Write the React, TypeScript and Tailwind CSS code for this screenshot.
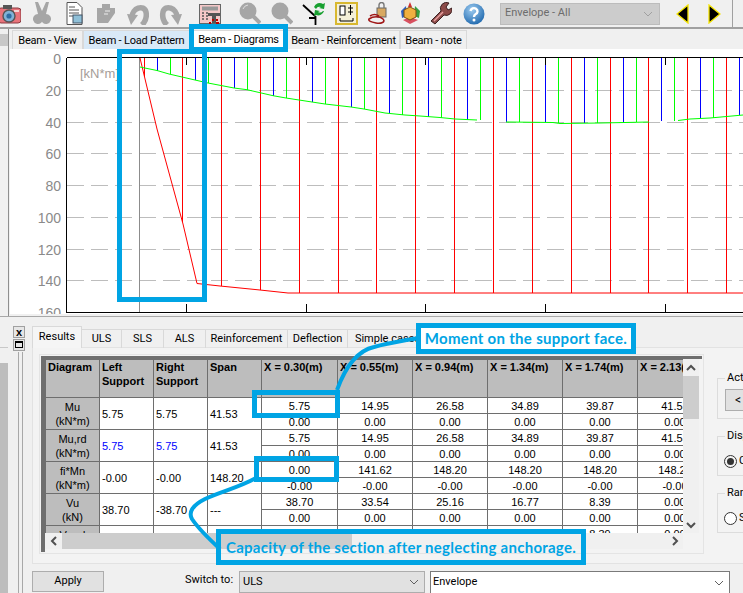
import React from 'react';

const sans = "font-['Roboto',sans-serif]";
const arial = "font-['Liberation_Sans',Arial,sans-serif]";

const redPts: [number, number][] = [[140, 59], [157, 130], [183, 225], [197, 284.5], [220, 287], [260, 291], [288, 294], [743, 294]];
const greenPts: [number, number][] = [
  [140, 68], [157, 71.5], [169, 75], [195, 81], [208, 84], [234, 89], [247, 90.7], [273, 96.7], [286, 99], [312, 103], [325, 105], [351, 108], [364, 110],
  [385, 114], [405, 116], [420, 117], [440, 118.5], [455, 120], [477, 121], [506, 123], [553, 123.5], [560, 124.5], [600, 124], [649, 123],
  [678, 121.5], [690, 120], [710, 119], [743, 116],
];

function at(pts: [number, number][], x: number) {
  for (let i = 1; i < pts.length; i++) {
    if (x <= pts[i][0]) {
      const [x0, y0] = pts[i - 1];
      const [x1, y1] = pts[i];
      return y0 + ((y1 - y0) * (x - x0)) / (x1 - x0);
    }
  }
  return pts[pts.length - 1][1];
}

const line = (pts: [number, number][]) => pts.map((p) => p.join(',')).join(' ');
const reds = [144.5, 182.5, 221.5, 260.5, 299.5, 338.5, 376.5, 415.5, 454.5, 493.5, 532.5, 571.5, 610.5, 648.5, 687.5, 726.5];
const ticks = [186.5, 306.5, 425.5, 545.5, 665.5];
const yLabels = [0, 20, 40, 60, 80, 100, 120, 140, 160];

function Chart() {
  return (
    <svg viewBox="10 50 733 265" className="block h-[265px] w-[733px] bg-white">
      {yLabels.map((v, i) => {
        const y = Math.round(59 + i * 31.75) + 0.5;
        return (
          <g key={v}>
            {i > 0 && i < 8 && <line x1={67} x2={743} y1={y} y2={y} stroke="#bdbdbd" strokeDasharray="17 7" />}
            <text x={61} y={y + 5} textAnchor="end" fontSize={14} fill="#8a8a8a" fontFamily="Liberation Sans">{v}</text>
          </g>
        );
      })}
      <text x={80} y={79} fontSize={13} fill="#a59d98" fontFamily="Liberation Sans">[kN*m]</text>
      <line x1={139.5} x2={139.5} y1={59} y2={313} stroke="#8c8c8c" />
      <g shapeRendering="crispEdges">
        {reds.map((x) => (
          <React.Fragment key={x}>
            <line x1={x} x2={x} y1={59} y2={at(redPts, x)} stroke="#ff0000" />
            <line x1={x + 13} x2={x + 13} y1={59} y2={at(greenPts, x + 13)} stroke="#0000ff" />
            <line x1={x + 26} x2={x + 26} y1={59} y2={at(greenPts, x + 26)} stroke="#00ff00" />
          </React.Fragment>
        ))}
        {ticks.map((x) => (
          <React.Fragment key={x}>
            <line x1={x} x2={x} y1={59} y2={66} stroke="#000" />
            <line x1={x} x2={x} y1={305} y2={313} stroke="#000" />
          </React.Fragment>
        ))}
      </g>
      <polyline points={line(redPts)} fill="none" stroke="#ff0000" />
      <polyline points={line(greenPts.filter((p) => p[0] <= 477))} fill="none" stroke="#00ff00" />
      <polyline points={line(greenPts.filter((p) => p[0] >= 506 && p[0] <= 649))} fill="none" stroke="#00ff00" strokeWidth={1.2} />
      <polyline points={line(greenPts.filter((p) => p[0] >= 678))} fill="none" stroke="#00ff00" />
      <path d="M66.5 58.5H743M66.5 58.5V313.5H743" fill="none" stroke="#000" shapeRendering="crispEdges" />
    </svg>
  );
}

function Toolbar() {
  const gray = '#a6a6a6';
  return (
    <div className="relative flex h-[27px] shrink-0 items-center">
      <svg width="21" height="20" viewBox="0 0 21 20" className="mt-[3px]">
        <rect x="-2" y="3" width="23" height="15" rx="3" fill="#e8737a" stroke="#8a3a40" />
        <rect x="3" y="0" width="9" height="4" fill="#555" />
        <rect x="14" y="5" width="5" height="2" fill="#f5d5d5" />
        <circle cx="9" cy="11" r="6" fill="#7fb2d6" stroke="#555" strokeWidth="1.4" />
        <circle cx="9" cy="11" r="2.6" fill="#2c6da3" />
      </svg>
      <svg width="18" height="23" viewBox="0 0 18 23" className="ml-[12px]">
        <path d="M2 0l3 0 4 9 4-9 3 0-3 12a5 5 0 1 1-3 9 4 4 0 0 1-1-5 4 4 0 0 1-1 5 5 5 0 1 1-3-9z" fill={gray} />
      </svg>
      <svg width="18" height="23" viewBox="0 0 18 23" className="ml-[15px]">
        <path d="M1 .5h10l5 5v17H1z" fill="#fff" stroke="#555" />
        <path d="M3 5h6M3 8h10M3 11h10M3 14h4" stroke="#555" />
        <rect x="7" y="13" width="9" height="8" fill="#8fc0d8" stroke="#456" />
      </svg>
      <svg width="21" height="21" viewBox="0 0 21 21" className="ml-[12px]">
        <path d="M1 5h5V1h8v4h5v5l-7 10H1z" fill={gray} />
        <path d="M9 8h5M8 11h4" stroke="#eee" />
      </svg>
      <svg width="22" height="22" viewBox="0 0 22 22" className="ml-[10px]">
        <path d="M5 14C5 5 17 1 19 9c1 5 0 9-4 13" fill="none" stroke={gray} strokeWidth="5.500" />
        <path d="M0 11l11 1-7 10z" fill={gray} />
      </svg>
      <svg width="24" height="22" viewBox="0 0 24 22" className="ml-[9px]">
        <path d="M19 14C19 5 7 1 5 9c-1 5 0 9 4 13" fill="none" stroke={gray} strokeWidth="5.500" />
        <path d="M24 11l-11 1 7 10z" fill={gray} />
      </svg>
      <svg width="23" height="22" viewBox="0 0 23 22" className="ml-[17px]">
        <rect x=".5" y="1.5" width="21" height="19" fill="#f5c8c8" stroke="#666" />
        <rect x="3" y="3.5" width="16" height="4" fill="#999" />
        <path d="M3 10h2M7 10h2M3 13h2M7 13h2M3 16h2M7 16h2" stroke="#555" strokeWidth="1.4" />
        <path d="M9 10h12v3h-4v7h-4v-7H9z" fill="#555" />
        <path d="M13 17h2M17 17h2M17 20h3M10 20h2" stroke="#b00" strokeWidth="2" />
      </svg>
      <svg width="23" height="23" viewBox="0 0 23 23" className="ml-[16px]">
        <circle cx="10" cy="9" r="8.5" fill={gray} />
        <path d="M15 14l7 7" stroke={gray} strokeWidth="4" />
        <path d="M5 7a6 6 0 0 1 5-4" stroke="#ddd" fill="none" />
      </svg>
      <svg width="23" height="23" viewBox="0 0 23 23" className="ml-[9px]">
        <circle cx="10" cy="9" r="8.5" fill={gray} />
        <path d="M15 14l7 7" stroke={gray} strokeWidth="4" />
      </svg>
      <svg width="24" height="23" viewBox="0 0 24 23" className="ml-[9px]">
        <path d="M1 3l12 11M7 16h7M13.500 14v9" stroke="#000" strokeWidth="1.800" fill="none" />
        <path d="M12 5a6 6 0 0 1 9-3l2-1-1 6-5-1 2-1a4 4 0 0 0-5 2zM22 9a6 6 0 0 1-8 4l-2 1 1-6 5 1-2 1a4 4 0 0 0 5-1z" fill="#18a030" />
      </svg>
      <svg width="23" height="23" viewBox="0 0 23 23" className="ml-[9px]">
        <rect x="1" y="1" width="21" height="21" fill="#f5f0d8" stroke="#d8b830" strokeWidth="2" />
        <rect x="5" y="4" width="5" height="9" fill="#fff" stroke="#000" />
        <path d="M13 6h5M13 10h5M15.500 3v10M5 16v3h13v-3" stroke="#000" fill="none" />
      </svg>
      <svg width="20" height="23" viewBox="0 0 20 23" className="ml-[10px]">
        <rect x="9" y="6" width="9" height="9" fill="#d8a860" stroke="#666" />
        <path d="M11 6V3a2.500 2.500 0 0 1 5 0v3" fill="none" stroke="#777" strokeWidth="1.400" />
        <path d="M1 17c4-3 11-3 14 0s-2 5-7 4-8-2-7-4zM2 14c3-2 6-2 9 0" fill="none" stroke="#a01818" strokeWidth="1.600" />
      </svg>
      <svg width="21" height="23" viewBox="0 0 21 23" className="ml-[12px]">
        <path d="M1 9l5-5 1 10-5 2z" fill="#3060c0" />
        <path d="M20 9l-5-5-1 10 5 2z" fill="#38a040" />
        <path d="M3 18l7 4 8-4-8-3z" fill="#d85060" />
        <path d="M10 0l2 5H8z" fill="#d03030" />
        <path d="M10 5l6 3v7l-6 3-6-3V8z" fill="#f0b040" stroke="#7a5010" />
      </svg>
      <svg width="22" height="23" viewBox="0 0 22 23" className="ml-[9px]">
        <path d="M1 19L11 9a6 6 0 0 1 8-8l-3 4 2 3 4-2a6 6 0 0 1-8 7L5 22z" fill="#8c4a48" stroke="#3a2020" />
        <path d="M4 19l9-9" stroke="#eaa0a0" strokeWidth="1.500" />
      </svg>
      <svg width="22" height="22" viewBox="0 0 22 22" className="ml-[11px]">
        <defs>
          <radialGradient id="help" cx="0.4" cy="0.3" r="0.8">
            <stop stopColor="#9ccbf0" />
            <stop offset="1" stopColor="#1560a8" />
          </radialGradient>
        </defs>
        <circle cx="11" cy="11" r="10.500" fill="url(#help)" />
        <path d="M7.500 8a3.500 3.200 0 1 1 5 3.200c-1 .6-1.500 1.200-1.500 2.800" fill="none" stroke="#fff" strokeWidth="2.400" />
        <circle cx="11" cy="17" r="1.500" fill="#fff" />
      </svg>
      <div className={`ml-[15px] flex h-[22px] w-[160px] items-center justify-between border border-[#bcbcbc] bg-[#cccccc] pl-[4px] pr-[6px] text-[11px] text-[#6d6d6d] ${sans}`}>
        <span>Envelope - All</span>
        <svg width="10" height="6" viewBox="0 0 10 6"><path d="M1 1l4 4 4-4" fill="none" stroke="#a0a0a0" /></svg>
      </div>
      <svg width="13" height="20" viewBox="0 0 13 20" className="ml-[16px]"><path d="M12 1v18L1 10z" fill="#000" stroke="#f4e400" strokeWidth="1.300" /></svg>
      <svg width="13" height="20" viewBox="0 0 13 20" className="ml-[19px]"><path d="M1 1v18l11-9z" fill="#000" stroke="#f4e400" strokeWidth="1.300" /></svg>
      <div className="ml-[11px] h-full w-px bg-[#a0a0a0]" />
    </div>
  );
}

const topTabs = [
  { label: 'Beam - View', w: 'w-[71px] pt-[2px]', cls: 'bg-[#f0f0f0]' },
  { label: 'Beam - Load Pattern', w: 'w-[107px] pt-[2px]', cls: 'bg-[#d9e9f7]' },
  { label: 'Beam - Diagrams', w: 'w-[97px] pb-[1px]', cls: 'bg-white' },
  { label: 'Beam - Reinforcement', w: 'w-[113px] pt-[2px]', cls: 'bg-[#f0f0f0]' },
  { label: 'Beam - note', w: 'w-[67px] pt-[2px]', cls: 'bg-[#f0f0f0]' },
];

const subTabs = [
  { label: 'ULS', w: 'w-[40px]' },
  { label: 'SLS', w: 'w-[42px]' },
  { label: 'ALS', w: 'w-[42px]' },
  { label: 'Reinforcement', w: 'w-[82px]' },
  { label: 'Deflection', w: 'w-[60px]' },
  { label: 'Simple cases', w: 'w-[80px]' },
];

type Row = { name: string; unit: string; left: string; right: string; span: string; blue?: boolean; values: [string, string][] };

const xHead = ['X = 0.30(m)', 'X = 0.55(m)', 'X = 0.94(m)', 'X = 1.34(m)', 'X = 1.74(m)', 'X = 2.13(m)'];
const zeros = (vals: string[], low = '0.00') => vals.map((v) => [v, low] as [string, string]);
const mu = ['5.75', '14.95', '26.58', '34.89', '39.87', '41.53'];
const vu = ['38.70', '33.54', '25.16', '16.77', '8.39', '0.00'];

const rows: Row[] = [
  { name: 'Mu', unit: '(kN*m)', left: '5.75', right: '5.75', span: '41.53', values: zeros(mu) },
  { name: 'Mu,rd', unit: '(kN*m)', left: '5.75', right: '5.75', span: '41.53', blue: true, values: zeros(mu) },
  { name: 'fi*Mn', unit: '(kN*m)', left: '-0.00', right: '-0.00', span: '148.20', values: zeros(['0.00', '141.62', '148.20', '148.20', '148.20', '148.20'], '-0.00') },
  { name: 'Vu', unit: '(kN)', left: '38.70', right: '-38.70', span: '---', values: zeros(vu) },
  { name: 'Vu,rd', unit: '(kN)', left: '38.70', right: '-38.70', span: '---', values: zeros(vu) },
];

function ResultsTable() {
  const cell = 'border border-[#6e6e6e] p-0';
  return (
    <table className={`w-[666px] table-fixed border-collapse text-[11px] leading-[14px] text-black ${arial}`}>
      <colgroup>
        <col className="w-[54px]" />
        <col className="w-[54px]" />
        <col className="w-[54px]" />
        <col className="w-[54px]" />
        <col className="w-[76px]" />
        <col className="w-[75px]" />
        <col className="w-[75px]" />
        <col className="w-[75px]" />
        <col className="w-[75px]" />
        <col className="w-[75px]" />
      </colgroup>
      <thead>
        <tr className="h-[38px] bg-[#bdbdbd]">
          {['Diagram', 'Left Support', 'Right Support', 'Span', ...xHead].map((h) => (
            <th key={h} className={`${cell} pl-[2px] text-left align-top font-bold leading-[14px]`}>
              {h}
            </th>
          ))}
        </tr>
      </thead>
      <tbody>
        {rows.map((r) => (
          <React.Fragment key={r.name}>
            <tr className="h-[16px]">
              <td rowSpan={2} className={`${cell} bg-[#bdbdbd] text-center`}>{r.name}<br />{r.unit}</td>
              <td rowSpan={2} className={`${cell} pl-[2px] ${r.blue ? 'text-[#0000ff]' : ''}`}>{r.left}</td>
              <td rowSpan={2} className={`${cell} pl-[2px] ${r.blue ? 'text-[#0000ff]' : ''}`}>{r.right}</td>
              <td rowSpan={2} className={`${cell} pl-[2px]`}>{r.span}</td>
              {r.values.map((v, i) => (
                <td key={i} className={`${cell} whitespace-nowrap text-center`}>{v[0]}</td>
              ))}
            </tr>
            <tr className="h-[16px]">
              {r.values.map((v, i) => (
                <td key={i} className={`${cell} whitespace-nowrap text-center`}>{v[1]}</td>
              ))}
            </tr>
          </React.Fragment>
        ))}
      </tbody>
    </table>
  );
}

function Chevron({ d }: { d: string }) {
  return (
    <svg width="10" height="10" viewBox="0 0 10 10"><path d={d} fill="none" stroke="#505050" strokeWidth="2" /></svg>
  );
}

function Group({ label, h, children }: { label: string; h: string; children: React.ReactNode }) {
  return (
    <fieldset className={`w-[60px] border border-[#dcdcdc] pl-[6px] text-[11px] ${h} ${sans}`}>
      <legend className="ml-[1px] px-[2px] leading-[14px]">{label}</legend>
      {children}
    </fieldset>
  );
}

export default function App() {
  return (
    <div className={`relative h-[593px] w-[743px] overflow-hidden bg-[#f0f0f0] text-black ${sans}`}>
      <Toolbar />
      <div className="h-[2px] bg-[#a0a0a0]" />

      {/* top part: tabs + chart */}
      <div className="flex h-[287px]">
        <div className="flex w-[10px] shrink-0">
          <div className="w-[8px] pt-[5px]">
            <div className="h-[12px] bg-[#c8c8c8]" />
          </div>
          <div className="w-[1px] bg-[#8e8e8e]" />
        </div>
        <div className="min-w-0 flex-1">
          <div className="flex h-[20px] items-end pl-[2px] text-[11px] leading-[16px] tracking-[-0.2px]">
            {topTabs.map((t) => (
              <div key={t.label} className={`flex h-[19px] shrink-0 items-center justify-center whitespace-nowrap border border-b-0 border-[#d9d9d9] ${t.w} ${t.cls}`}>
                {t.label}
              </div>
            ))}
          </div>
          <Chart />
        </div>
      </div>

      <div className="h-[1px] bg-[#a8a8a8]" />

      {/* bottom part */}
      <div className="flex h-[276px]">
        <div className="flex w-[32px] shrink-0">
          <div className="mt-[30px] h-full w-[8px] border-t border-[#c8c8c8] pt-[15px]">
            <div className="h-full bg-[#bdbdbd]" />
          </div>
          <div className="flex w-[24px] flex-col items-start pl-[5px] pt-[9px]">
            <div className={`flex h-[12px] w-[12px] items-center justify-center border border-[#a0a0a0] bg-[#e6e6e6] text-[11px] font-bold leading-none ${arial}`}>x</div>
            <div className="mt-[1px] flex h-[12px] w-[12px] items-center justify-center border border-[#a0a0a0] bg-[#e6e6e6]">
              <div className="h-[7px] w-[8px] border border-t-2 border-black" />
            </div>
            <div className="ml-[5px] mt-[1px] h-[250px] w-[5px] border-x border-[#a8a8a8]" />
          </div>
        </div>

        <div className="min-w-0 flex-1 pt-[9px]">
          <div className="flex h-[22px] items-end text-[11px]">
            <div className="z-10 flex h-[22px] w-[50px] items-center justify-center border border-b-0 border-[#d9d9d9] bg-[#f5f5f5]">Results</div>
            {subTabs.map((t) => (
              <div key={t.label} className={`flex h-[19px] shrink-0 items-center justify-center whitespace-nowrap border-r border-t border-[#d9d9d9] ${t.w}`}>
                {t.label}
              </div>
            ))}
          </div>

          <div className="-mt-px flex h-[217px] border border-r-0 border-[#e2e2e2] bg-[#f3f3f3] pl-[6px] pt-[6px]">
            <div className="h-[200px] w-[665px] shrink-0 border border-[#e4e4e4] p-[1px]">
              <div className="flex h-[196px] flex-col border-l-4 border-t-[3px] border-[#6e6e6e]">
                <div className="flex h-[174px] shrink-0">
                  <div className="h-full w-[638px] shrink-0 overflow-hidden bg-white">
                    <ResultsTable />
                  </div>
                  <div className="flex w-[16px] shrink-0 flex-col items-center bg-[#f0f0f0]">
                    <div className="flex h-[17px] items-center"><Chevron d="M1 7l4-4 4 4" /></div>
                    <div className="h-[43px] w-full bg-[#cdcdcd]" />
                    <div className="flex-1" />
                    <div className="flex h-[17px] items-center"><Chevron d="M1 3l4 4 4-4" /></div>
                  </div>
                </div>
                <div className="flex h-[16px] w-[638px] items-center bg-[#f0f0f0]">
                  <div className="flex h-full w-[17px] items-center justify-center"><Chevron d="M7 1L3 5l4 4" /></div>
                  <div className="h-full w-[290px] bg-[#cdcdcd]" />
                  <div className="flex-1" />
                  <div className="flex h-full w-[17px] items-center justify-center"><Chevron d="M3 1l4 4-4 4" /></div>
                </div>
              </div>
            </div>

            <div className="ml-[13px] flex w-[60px] shrink-0 flex-col pt-[17px]">
              <Group label="Action" h="h-[48px]">
                <div className="ml-px mt-[4px] flex h-[22px] w-[60px] items-center border border-[#adadad] bg-[#e1e1e1] pl-[9px] text-[12px]">&lt;</div>
              </Group>
              <div className="mt-[10px]">
                <Group label="Display" h="h-[47px]">
                  <label className="mt-[10px] flex items-center gap-[2px] whitespace-nowrap">
                    <span className="flex h-[13px] w-[13px] items-center justify-center rounded-full border border-[#333]">
                      <span className="h-[7px] w-[7px] rounded-full bg-[#333]" />
                    </span>
                    Chart
                  </label>
                </Group>
              </div>
              <div className="mt-[10px]">
                <Group label="Range" h="h-[47px]">
                  <label className="mt-[10px] flex items-center gap-[2px] whitespace-nowrap">
                    <span className="h-[13px] w-[13px] rounded-full border border-[#333] bg-white" />
                    Span
                  </label>
                </Group>
              </div>
            </div>
          </div>

          <div className="flex h-[30px] items-start pt-[7px] text-[11px]">
            <button className="h-[21px] w-[72px] border border-[#adadad] bg-[#e1e1e1]">Apply</button>
            <span className="ml-[81px] mt-[1px] w-[54px]">Switch to:</span>
            <div className="flex h-[22px] w-[186px] items-center justify-between border border-[#adadad] bg-[#e1e1e1] pl-[3px] pr-[5px]">
              <span>ULS</span>
              <svg width="10" height="6" viewBox="0 0 10 6"><path d="M1 1l4 4 4-4" fill="none" stroke="#606060" /></svg>
            </div>
            <div className="ml-[5px] flex h-[23px] w-[300px] items-center justify-between border border-[#7a7a7a] bg-white pl-[2px] pr-[5px]">
              <span>Envelope</span>
              <svg width="10" height="6" viewBox="0 0 10 6"><path d="M1 1l4 4 4-4" fill="none" stroke="#606060" /></svg>
            </div>
          </div>
        </div>
      </div>

      {/* annotations drawn over the screenshot */}
      <svg className="pointer-events-none absolute left-0 top-0" width="743" height="593" viewBox="0 0 743 593">
        <path d="M337 390C345 368 356 351 374 347C388 343 402 341 418 338" fill="none" stroke="#00a4e4" strokeWidth="4" />
        <path d="M256 478C238 488 222 491 205 499C193 505 188 512 192 519C198 528 208 538 220 549" fill="none" stroke="#00a4e4" strokeWidth="4" />
      </svg>
      <div className="absolute left-[189px] top-[24px] h-[28px] w-[99px] border-[5px] border-[#00a4e4]" />
      <div className="absolute left-[117px] top-[49px] h-[253px] w-[90px] border-[5px] border-[#00a4e4]" />
      <div className="absolute left-[252px] top-[390px] h-[28px] w-[88px] border-[5px] border-[#00a4e4]" />
      <div className="absolute left-[254px] top-[456px] h-[26px] w-[85px] border-[5px] border-[#00a4e4]" />
      <div className="absolute left-[416px] top-[323px] flex h-[31px] w-[220px] items-center justify-center border-[5px] border-[#00a4e4] bg-white font-['Lato',sans-serif] text-[15px] font-bold tracking-[0.3px] text-[#00a4e4]">
        Moment on the support face.
      </div>
      <div className="absolute left-[216px] top-[529px] flex h-[36px] w-[370px] items-center justify-center border-[5px] border-[#00a4e4] font-['Lato',sans-serif] text-[15px] font-bold tracking-[0.25px] text-[#00a4e4]">
        Capacity of the section after neglecting anchorage.
      </div>
    </div>
  );
}
